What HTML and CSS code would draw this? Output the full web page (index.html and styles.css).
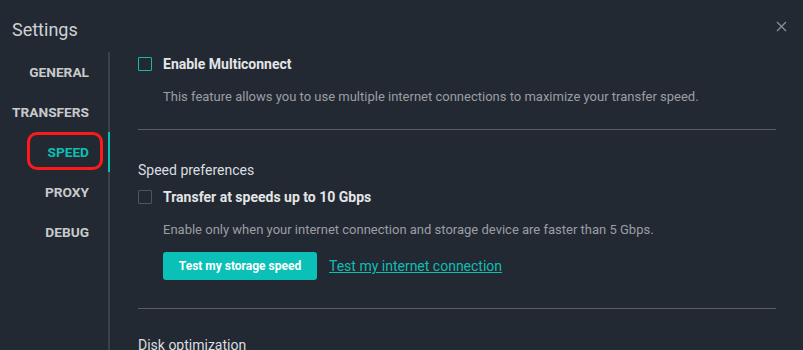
FILE: index.html
```html
<!DOCTYPE html>
<html>
<head>
<meta charset="utf-8">
<link rel="stylesheet" href="styles.css">
</head>
<body>
<div class="window">
  <header class="head">
    <h1 class="title">Settings</h1>
    <button class="close" aria-label="Close">
      <svg width="11" height="11" viewBox="0 0 11 11"><path d="M1 1L10 10M10 1L1 10" stroke="#8a9099" stroke-width="1.3" fill="none"/></svg>
    </button>
  </header>
  <div class="body">
    <nav class="nav">
      <a class="nav-item">GENERAL</a>
      <a class="nav-item">TRANSFERS</a>
      <a class="nav-item active">SPEED<span class="highlight"></span></a>
      <a class="nav-item">PROXY</a>
      <a class="nav-item">DEBUG</a>
    </nav>
    <main class="content">
      <section class="section first">
        <label class="check-row"><span class="box teal"></span><span class="check-label">Enable Multiconnect</span></label>
        <p class="desc">This feature allows you to use multiple internet connections to maximize your transfer speed.</p>
      </section>
      <section class="section">
        <h2 class="sec-title">Speed preferences</h2>
        <label class="check-row"><span class="box"></span><span class="check-label">Transfer at speeds up to 10 Gbps</span></label>
        <p class="desc">Enable only when your internet connection and storage device are faster than 5 Gbps.</p>
        <div class="actions">
          <button class="btn">Test my storage speed</button>
          <a class="link">Test my internet connection</a>
        </div>
      </section>
      <section class="section last">
        <h2 class="sec-title">Disk optimization</h2>
      </section>
    </main>
  </div>
</div>
</body>
</html>
```
FILE: styles.css
```css
* { box-sizing: border-box; }
html, body { margin: 0; padding: 0; }
body {
  background: #222933;
  font-family: Roboto, "Liberation Sans", sans-serif;
  width: 803px;
  height: 350px;
  overflow: hidden;
}
.window { height: 350px; overflow: hidden; }
.head {
  display: flex;
  justify-content: space-between;
  align-items: flex-start;
  height: 52px;
}
.title {
  margin: 0;
  padding: 19px 0 0 12px;
  font-size: 18px;
  font-weight: 400;
  color: #cfd1d4;
  line-height: 22px;
}
.close {
  background: none;
  border: 0;
  padding: 0;
  margin: 21px 16px 0 0;
  width: 11px;
  height: 11px;
  display: flex;
}
.body {
  display: flex;
  height: 298px;
}
.nav {
  width: 110px;
  border-right: 2px solid #3a414b;
  display: flex;
  flex-direction: column;
  align-items: flex-end;
  padding: 0 19px 0 0;
}
.nav-item {
  position: relative;
  display: block;
  height: 40px;
  line-height: 40px;
  font-size: 13.7px;
  font-weight: 700;
  color: #c9cacc;
}
.nav-item.active { color: #0bbfb5; }
.nav-item.active::after {
  content: "";
  position: absolute;
  right: -21px;
  top: 0;
  width: 2px;
  height: 40px;
  background: #0bbfb5;
}
.highlight {
  position: absolute;
  left: -20px;
  top: 0;
  width: 76px;
  height: 38px;
  border: 3px solid #ff1a1a;
  border-radius: 10px;
}
.content {
  flex: 1;
  padding: 0 27px 0 28px;
}
.section {
  border-bottom: 1px solid #5a5d62;
  padding: 32px 0 28px;
}
.section.first { padding-top: 4px; padding-bottom: 24px; }
.section.last { border-bottom: 0; padding-top: 28px; }
.check-row {
  display: flex;
  align-items: center;
  height: 16px;
}
.box {
  width: 14px;
  height: 14px;
  border: 1px solid #4f555e;
  border-radius: 1px;
  margin-right: 11px;
}
.box.teal { border-color: #17b8ae; }
.check-label {
  font-size: 14px;
  font-weight: 700;
  color: #e4e5e7;
}
.desc {
  margin: 17px 0 0 25px;
  font-size: 13px;
  line-height: 16px;
  color: #9c9ea2;
}
.sec-title {
  margin: 0 0 11px;
  font-size: 14px;
  font-weight: 400;
  color: #dcdde0;
  line-height: 16px;
}
.actions {
  display: flex;
  align-items: center;
  margin: 14px 0 0 25px;
}
.btn {
  background: #0bc0b6;
  color: #fff;
  border: 0;
  border-radius: 3px;
  height: 28px;
  width: 154px;
  font-family: Roboto, "Liberation Sans", sans-serif;
  font-size: 12px;
  font-weight: 700;
  padding: 0;
}
.link {
  margin-left: 12px;
  color: #11bdb3;
  text-decoration: underline;
  font-size: 14px;
}
```
